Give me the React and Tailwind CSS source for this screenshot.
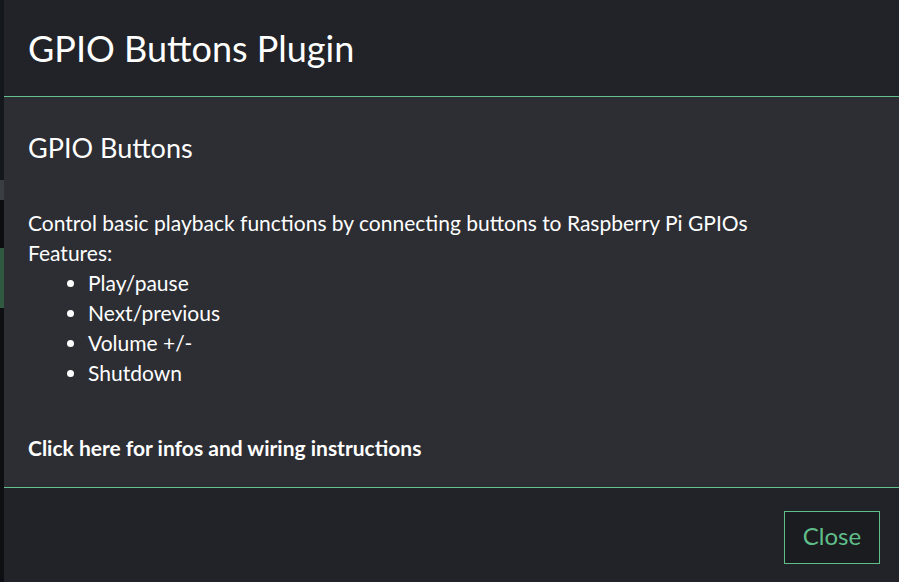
import React from 'react';

const features = ['Play/pause', 'Next/previous', 'Volume +/-', 'Shutdown'];

const App = () => {
  return (
    <div
      className="flex h-[582px] w-[899px] overflow-hidden bg-[#0b0d10]"
      style={{ fontFamily: 'Lato, "Noto Sans", sans-serif' }}
    >
      {/* backdrop strip */}
      <div className="flex w-[4px] shrink-0 flex-col">
        <div className="h-[180px] bg-[#14171c]" />
        <div className="h-[20px] bg-[#3a3d42]" />
        <div className="h-[48px] bg-[#0b0d10]" />
        <div className="h-[60px] bg-[#2f5a3f]" />
        <div className="flex-1 bg-[#0d0f12]" />
      </div>

      {/* modal */}
      <div className="flex w-[910px] shrink-0 flex-col text-white">
        <div className="flex h-[96px] items-center bg-[#212328] px-[24px]">
          <h1 className="text-[36px] leading-none">GPIO Buttons Plugin</h1>
        </div>
        <div className="h-px bg-[#63c08f]" />

        <div className="h-[390px] bg-[#2c2e33] px-[24px] pt-[36px] text-[21px] leading-[30px]">
          <h2 className="text-[27px] leading-[30px]">GPIO Buttons</h2>
          <p className="mt-[45px]">Control basic playback functions by connecting buttons to Raspberry Pi GPIOs</p>
          <p>Features:</p>
          <ul className="list-disc pl-[60px]">
            {features.map((f) => (
              <li key={f}>{f}</li>
            ))}
          </ul>
          <p className="mt-[45px] font-bold">Click here for infos and wiring instructions</p>
        </div>
        <div className="h-px bg-[#63c08f]" />

        <div className="flex flex-1 items-start justify-end bg-[#212328] pr-[34px] pt-[23px]">
          <button className="h-[53px] w-[96px] border border-[#5fbf8a] bg-[#1b1c1f] pb-[3px] text-[24px] text-[#5fbf8a]">
            Close
          </button>
        </div>
      </div>
    </div>
  );
};

export default App;
